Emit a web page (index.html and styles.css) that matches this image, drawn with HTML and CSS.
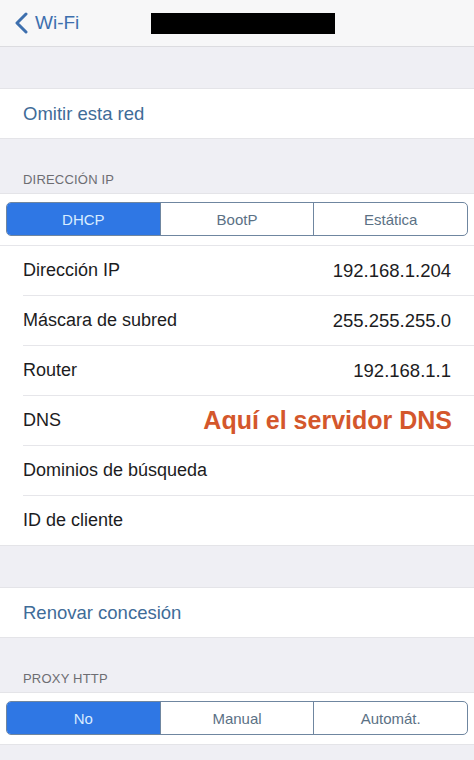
FILE: index.html
```html
<!DOCTYPE html>
<html lang="es">
<head>
  <meta charset="UTF-8">
  <meta name="viewport" content="width=device-width, initial-scale=1.0">
  <title>Wi-Fi</title>
  <link rel="stylesheet" href="styles.css">
</head>
<body>
  <div class="navbar">
    <a class="back" href="#">
      <svg class="chevron" width="16" height="22" viewBox="0 0 16 22">
        <path d="M13 2 L4 11 L13 20" fill="none" stroke="#3d6fae" stroke-width="3" stroke-linecap="round" stroke-linejoin="round"/>
      </svg>
      <span>Wi-Fi</span>
    </a>
    <div class="title-bar"></div>
  </div>

  <div class="spacer"></div>

  <div class="group">
    <div class="row action">Omitir esta red</div>
  </div>

  <div class="section-header">DIRECCIÓN IP</div>

  <div class="group">
    <div class="segment-band">
      <div class="segmented">
        <div class="seg active">DHCP</div>
        <div class="seg">BootP</div>
        <div class="seg">Estática</div>
      </div>
    </div>
    <div class="row"><span>Dirección IP</span><span class="value">192.168.1.204</span></div>
    <div class="row"><span>Máscara de subred</span><span class="value">255.255.255.0</span></div>
    <div class="row"><span>Router</span><span class="value">192.168.1.1</span></div>
    <div class="row"><span>DNS</span><span class="value note">Aquí el servidor DNS</span></div>
    <div class="row"><span>Dominios de búsqueda</span></div>
    <div class="row"><span>ID de cliente</span></div>
  </div>

  <div class="spacer"></div>

  <div class="group">
    <div class="row action">Renovar concesión</div>
  </div>

  <div class="section-header">PROXY HTTP</div>

  <div class="group">
    <div class="segment-band">
      <div class="segmented">
        <div class="seg active">No</div>
        <div class="seg">Manual</div>
        <div class="seg">Automát.</div>
      </div>
    </div>
  </div>
</body>
</html>
```

FILE: styles.css
```css
body {
  margin: 0;
  background: #efeff4;
  font-family: "Liberation Sans", Arial, sans-serif;
  color: #1c1c1e;
  overflow: hidden;
}
.navbar {
  height: 46px;
  background: #f7f7f8;
  border-bottom: 1px solid #dcdce0;
  display: flex;
  align-items: center;
}
.back {
  display: flex;
  align-items: center;
  gap: 6px;
  padding-left: 13px;
  color: #3d6fae;
  text-decoration: none;
  font-size: 19px;
}
.title-bar {
  width: 184px;
  height: 21px;
  background: #000;
  margin-left: 72px;
  margin-top: 1px;
}
.spacer {
  height: 41px;
}
.group {
  background: #fff;
  border-top: 1px solid #e4e4e8;
  border-bottom: 1px solid #e4e4e8;
}
.row {
  height: 49px;
  margin-left: 23px;
  padding-right: 23px;
  display: flex;
  align-items: center;
  justify-content: space-between;
  font-size: 18px;
  border-bottom: 1px solid #e6e6ea;
}
.row:last-child {
  border-bottom: none;
}
.action {
  color: #3f6c98;
  font-size: 18.5px;
}
.value {
  color: #1c1c1e;
  font-size: 18.5px;
}
.note {
  color: #d4572c;
  font-weight: bold;
  font-size: 25px;
  margin-right: -1px;
}
.section-header {
  height: 54px;
  padding: 0 23px 6px;
  box-sizing: border-box;
  display: flex;
  align-items: flex-end;
  color: #6d6d72;
  font-size: 13px;
  letter-spacing: 0.2px;
}
.segment-band {
  padding: 8px 6px 9px;
  border-bottom: 1px solid #e6e6ea;
}
.group .segment-band:last-child {
  border-bottom: none;
}
.segmented {
  display: flex;
  height: 32px;
  border: 1px solid #6f86a0;
  border-radius: 5px;
  overflow: hidden;
}
.seg {
  flex: 1;
  display: flex;
  align-items: center;
  justify-content: center;
  font-size: 15px;
  color: #5b7185;
  border-left: 1px solid #6f86a0;
}
.seg:first-child {
  border-left: none;
}
.seg.active {
  background: #2f77e4;
  color: #d8ecff;
}
```
